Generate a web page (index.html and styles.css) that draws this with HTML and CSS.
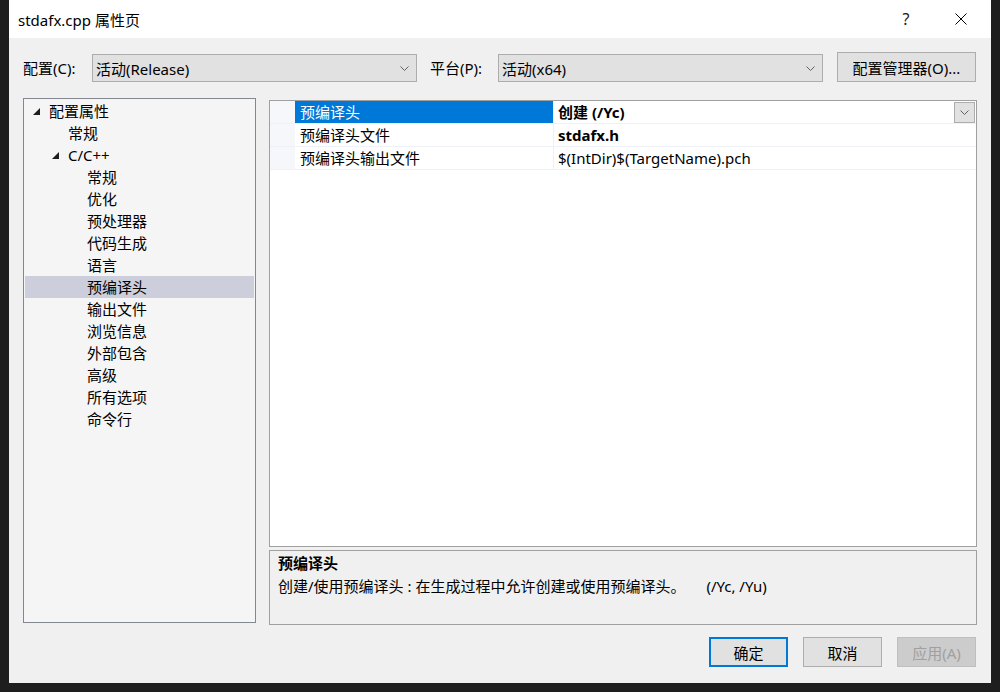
FILE: index.html
```html
<html>
<head>
  <meta charset="UTF-8" />
  <title>stdafx.cpp 属性页</title>
  <link rel="stylesheet" href="styles.css">
</head>
<body>

  <div class="dialog">
    <div class="titlebar">
      <span class="title">stdafx.cpp 属性页</span>
      <span class="help">?</span>
      <span class="close">
        <svg width="12" height="12" viewBox="0 0 12 12"><path d="M0.5 0.5 L11.5 11.5 M11.5 0.5 L0.5 11.5" stroke="#000" stroke-width="1" fill="none"/></svg>
      </span>
    </div>

    <div class="toolbar">
      <span class="label label-config">配置(C):</span>
      <div class="combo">
        <span class="combo-text">活动(Release)</span>
        <svg class="chevron" width="9" height="5" viewBox="0 0 9 5"><path d="M0.5 0.5 L4.5 4.5 L8.5 0.5" stroke="#606060" fill="none"/></svg>
      </div>
      <span class="label label-platform">平台(P):</span>
      <div class="combo">
        <span class="combo-text">活动(x64)</span>
        <svg class="chevron" width="9" height="5" viewBox="0 0 9 5"><path d="M0.5 0.5 L4.5 4.5 L8.5 0.5" stroke="#606060" fill="none"/></svg>
      </div>
      <button class="btn btn-manager">配置管理器(O)...</button>
    </div>

    <div class="main">
      <div class="tree">
        <div class="node lvl0"><span class="toggle"><svg width="7" height="7" viewBox="0 0 7 7"><polygon points="7,0 7,7 0,7" fill="#1e1e1e"/></svg></span>配置属性</div>
        <div class="node lvl1">常规</div>
        <div class="node lvl1"><span class="toggle"><svg width="7" height="7" viewBox="0 0 7 7"><polygon points="7,0 7,7 0,7" fill="#1e1e1e"/></svg></span>C/C++</div>
        <div class="node lvl2">常规</div>
        <div class="node lvl2">优化</div>
        <div class="node lvl2">预处理器</div>
        <div class="node lvl2">代码生成</div>
        <div class="node lvl2">语言</div>
        <div class="node lvl2 selected">预编译头</div>
        <div class="node lvl2">输出文件</div>
        <div class="node lvl2">浏览信息</div>
        <div class="node lvl2">外部包含</div>
        <div class="node lvl2">高级</div>
        <div class="node lvl2">所有选项</div>
        <div class="node lvl2">命令行</div>
      </div>

      <div class="right">
        <div class="grid">
          <div class="row">
            <div class="gutter"></div>
            <div class="name active">预编译头</div>
            <div class="value bold">
              <span class="value-text">创建 (/Yc)</span>
              <span class="drop">
                <svg width="9" height="5" viewBox="0 0 9 5"><path d="M0.5 0.5 L4.5 4.5 L8.5 0.5" stroke="#606060" fill="none"/></svg>
              </span>
            </div>
          </div>
          <div class="row">
            <div class="gutter"></div>
            <div class="name">预编译头文件</div>
            <div class="value bold"><span class="value-text">stdafx.h</span></div>
          </div>
          <div class="row">
            <div class="gutter"></div>
            <div class="name">预编译头输出文件</div>
            <div class="value"><span class="value-text">$(IntDir)$(TargetName).pch</span></div>
          </div>
        </div>

        <div class="desc">
          <div class="desc-title">预编译头</div>
          <div>创建/使用预编译头 : 在生成过程中允许创建或使用预编译头。<span class="desc-flags">(/Yc, /Yu)</span></div>
        </div>
      </div>
    </div>

    <div class="footer">
      <button class="btn btn-default">确定</button>
      <button class="btn">取消</button>
      <button class="btn" disabled>应用(A)</button>
    </div>
  </div>

</body>
</html>
```

FILE: styles.css
```css
body {
  margin: 0;
  background-color: #1e1e1e;
  font-family: "Segoe UI", "Noto Sans", "Noto Sans CJK SC", sans-serif;
  font-size: 15px;
  color: #000;
}
.dialog {
  margin-left: 9px;
  width: 982px;
  height: 683px;
  background-color: #f0f0f0;
  display: flex;
  flex-direction: column;
}
.titlebar {
  height: 38px;
  background-color: #fff;
  display: flex;
  align-items: center;
  padding-left: 9px;
  padding-right: 7px;
}
.title {
  flex: 1;
  font-size: 15px;
}
.help {
  width: 30px;
  text-align: center;
  font-size: 16px;
  color: #1a1a1a;
}
.close {
  width: 46px;
  margin-left: 17px;
  display: flex;
  justify-content: center;
}
.toolbar {
  display: flex;
  align-items: flex-end;
  height: 30px;
  margin-top: 14px;
  padding: 0 14px;
}
.label {
  height: 28px;
  line-height: 28px;
}
.label-config {
  width: 69px;
}
.label-platform {
  width: 68px;
  margin-left: 13px;
}
.combo {
  box-sizing: border-box;
  width: 325px;
  height: 28px;
  border: 1px solid #adadad;
  background-color: #e1e1e1;
  display: flex;
  align-items: center;
  padding: 0 7px 0 3px;
}
.combo-text {
  flex: 1;
}
.btn {
  box-sizing: border-box;
  height: 30px;
  width: 79px;
  border: 1px solid #adadad;
  background-color: #e1e1e1;
  font-family: inherit;
  font-size: 15px;
  color: #000;
  padding: 0;
}
.btn-manager {
  width: 139px;
  margin-left: 14px;
}
.btn-default {
  border: 2px solid #0078d7;
}
.btn:disabled {
  background-color: #cccccc;
  border-color: #bfbfbf;
  color: #a0a0a0;
}
.main {
  display: flex;
  gap: 13px;
  height: 527px;
  margin-top: 16px;
  padding: 0 14px;
}
.tree {
  box-sizing: border-box;
  width: 233px;
  height: 525px;
  border: 1px solid #828790;
  background-color: #f5f5f5;
  padding: 1px;
}
.node {
  height: 22px;
  line-height: 22px;
  display: flex;
  align-items: center;
  white-space: nowrap;
}
.node.selected {
  background-color: #cccedb;
}
.lvl0 {
  padding-left: 24px;
}
.lvl1 {
  padding-left: 43px;
}
.lvl2 {
  padding-left: 62px;
}
.toggle {
  width: 16px;
  margin-left: -16px;
  display: flex;
  align-items: center;
}
.right {
  flex: 1;
  padding-top: 2px;
  display: flex;
  flex-direction: column;
}
.grid {
  box-sizing: border-box;
  height: 447px;
  border: 1px solid #a0a0a0;
  background-color: #fff;
}
.row {
  box-sizing: border-box;
  display: flex;
  height: 23px;
  border-bottom: 1px solid #eef1f7;
}
.gutter {
  width: 25px;
  background-color: #f5f7fb;
}
.name {
  box-sizing: border-box;
  width: 259px;
  padding-left: 5px;
  line-height: 22px;
  white-space: nowrap;
  border-right: 1px solid #eef1f7;
}
.name.active {
  background-color: #0078d7;
  color: #fff;
}
.value {
  flex: 1;
  display: flex;
  align-items: center;
  padding-left: 4px;
  line-height: 22px;
}
.value.bold {
  font-weight: bold;
}
.value-text {
  flex: 1;
}
.drop {
  box-sizing: border-box;
  width: 21px;
  height: 21px;
  margin-right: 1px;
  border: 1px solid #adadad;
  background-color: #e1e1e1;
  display: flex;
  align-items: center;
  justify-content: center;
}
.desc {
  box-sizing: border-box;
  height: 75px;
  margin-top: 3px;
  border: 1px solid #a0a0a0;
  padding: 1px 8px;
  line-height: 23px;
}
.desc-title {
  font-weight: bold;
}
.desc-flags {
  margin-left: 21px;
}
.footer {
  display: flex;
  justify-content: flex-end;
  gap: 15px;
  margin-top: 12px;
  padding-right: 15px;
}
```
